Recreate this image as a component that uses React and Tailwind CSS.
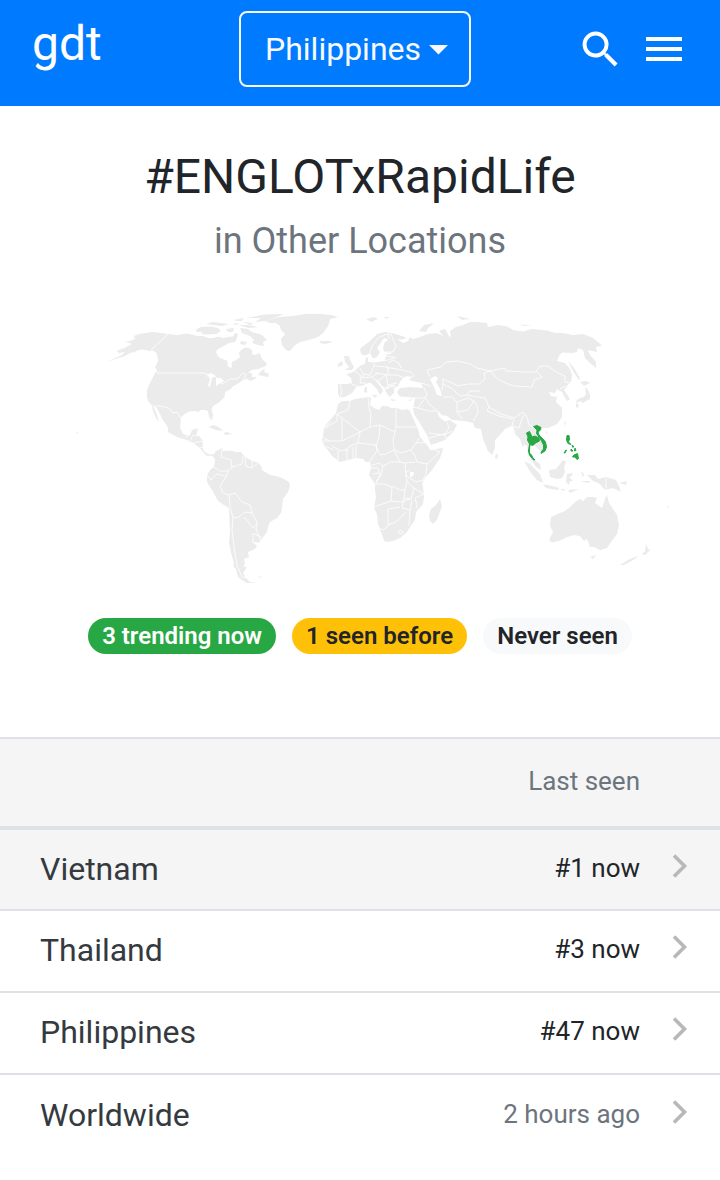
import React, { useState } from 'react';

const locations = [
    { name: 'Vietnam', seen: '#1 now', active: true, current: true },
    { name: 'Thailand', seen: '#3 now', active: true },
    { name: 'Philippines', seen: '#47 now', active: true },
    { name: 'Worldwide', seen: '2 hours ago', active: false },
];

const countries = ['Philippines', 'Thailand', 'Vietnam', 'Worldwide'];

// Land masses
const land = [
    // North and Central America
    'M117 351L121 349 125 348 128 346 132 344 129 343 125 342 130 341 135 339 134 336 139 334 145 333 153 332 161 333 168 334 177 335 187 333.5 192 334.5 197 336 203 336 208 338 213 338 218 336.5 223 338 228 337 233 336.5 235 333 238 334 237 338 235 342 229 343 223 346.5 218 349 216 352 218 356 220 358 227 360.5 228 366.5 231.5 368 232 362 236 360 240 357 239 353 241 350 245 347.5 249 348 252 350 252 354 255 355 260 353 261 357 263 360 266.5 363 266 366 258 369 252 370 248 373 252 373 252 377 255 377 257 376 255 379 250 381 248 379 243 380 239 383 237 384 232 387 231 389 225 392 225 395 224 398 218 403 213 406 211.5 409 213 415 212 420.5 209 417 208 411 205 410 200 410 199 412 195 411 190 411.5 187 412.5 182 416 181 418 180 427 183 434 187 435.5 190 435 192 430 195 429 198 428.5 197 433 196 436 199 436 203 441 202.5 447 204 451 208 454 213 454.5 214 457 210 455.5 207 456 203 452 200 448 196 445 193 443 187 440 183 439 177 437 168 432 168 428 166.5 425 162 419 160 414 158 410 156 407 153.5 407 157 415 159 422.5 155.5 417 153 411 152 406 148 401 147 397 147 390 149 385 151.5 380 155 373 157 370 155 367 157 364 158 360 156 353 153 351 150 351 142 349.5 138 350 135 352 130 353 125 356 117 358.5 107 361.5 122 355 125 352 119 353z',
    'M196 330L202 327 210 326.5 218 328 221 331 216 334 207 334.5 201 334 203 332 197 332z',
    'M195 330L201 327 207 327 201 330zM206 324L213 322 220 323 229 324 222 326 213 325zM226 329L234 328 233 332 228 332zM232 324L239 323 237 325zM233 320L244 318 242 321 237 321zM240 328L248 329 252 332 262 335 267 340 263 342 264 346 258 345 252 343 254 340 250 336 242 333zM241 341L247 342 245 345 240 344zM238 325L248 325 258 327 249 328zM243 322L254 323 250 325zM247 318L264 314.5 284 314 274 318 265 321 255 322 261 318z',
    'M265 321L279 317 293 316 305 314 320 314 331 315 338 317 330 319 329 324 326 329 323 333 318 337 309 340 300 342 294 346 290 351 286 350 282 345 281 339 285 334 281 330 280 326 276 323 270 323z',
    'M258 375L262 370 265 369 264 372 269 374 268 377z',
    'M208 427L214 425 220 428 223 431 216 430zM223 433L227 432 232 434 226 435z',
    // South America
    'M213 455L216 451 222 448 223 451 230 450.5 236 452 241 452 245 457 252 461 258 462.5 261 466 262 470 270 475 276 476 282 478 289 482 290 486 288 492 283 499 282 508 281 513 277 518 270 522 268 527 267 532 261 540 259 542.5 253 542 257 546 255 549 248 552 249 557 244 559 245 564 243 566 247 567 243 573 245 577 250 582 256 583 247 583 242 580 238 577 236 569 233 566 234 563 231 553 229 542 230 533 229 508 224 505 218 501 212 490 207 482 207 475 210 470 214 467 215 460z',
    'M258 577L262 576 260 578z',
    // Africa
    'M342 401L350 401 355 399 362 398 368 397 371 398 370 405 374 408 379 410 382 406 387 406 391 408 397 408 402 410 407 409 410 411 413 418 418 429 420 437 424 442 428 446 430 450 436 449 443 448 442 453 440 458 432 470 425 478 422 484 423 487 424 497 423 504 416 512 415 520 410 527 407 532 400 538 393 541 387 542 384 541 383 537 378 524 377 514 374 508 376 497 375 490 375 484 369 475 371 468 370 462 366 462 363 459 356 458 348 460 340 462 332 456 328 450 325 447 322 440 323 436 324 428 328 422 332 418 336 413 338 404z',
    'M440 499L442 506 437 520 433 524 430 521 429 515 431 509 436 505z',
    // Europe and Asia
    'M339 397.5L338 392 338 384 347 384 352 383 351 378 346 374 351 373 355 370.5 360 366 365 363.5 366 357 368 358 368 362 375 362.5 385 361 386 355 393 353 385 352 383 349 384 343 388 340 386 338 383 339 380 344 377 348 380 352 377 357 373 358.5 370 353 365 355.5 361 354 360 349 362 347 370 341 377 334 385 332 392 333 402 336 407 338 402 339.5 397 339 403 343 408 341 410 337 413 339 420 337 428 334 437 333 443 336 439 331 445 329 449 336 451 337 450 331 456 327 463 325 470 322 477 322 487 323 488 327 498 325 507 326.5 513 330 523 331.5 532 329 547 330.5 555 333 563 333 573 335 583 334 593 338 602 345.5 596 347 597 352 588 350 590 355 596 362 596 368 590 363 585 358 583 350 578 348 577 352 573 353 562 352.5 559 356 557 361 565 363 570 369 572 375 571 382 567 386 564 390 566 393 570 399 567 401 564 396 562 392 557 389 555 393 549 392 551 396 557 397 556 402 562 408 562 417 557 424 548 428 541 428 538 432 541 438 545 442 547 448 543 453 538 449 533 444 530 446 530 454 535 460 540 464 541 470 536 467 532 461 528 454 527 445 522 446 520 439 515 434 514 428 511 426 505 429 499 436 495 440 495 448 492 455 488 451 483 439 481 429 475 428 473 423 465 421 452 420 447 416 442 415 437 410 439 417 445 421.5 450 420 457 425 453 432 445 440 431 445 427 435 421 425 414 414 413 409 415 398 407 397 400 396.5 397 392 400 388 410 387 423 388 421 383 409 380 412 377 407 376 403 378 400 382 398 386 394 388 394 393 390 397 387 394 384 388 378 382 375 380 381 387 383 391 380 395 377 389 370 382.5 366 384 361 386 356 387 352 393 345 397z',
    'M419 331L424 325 434 323 428 328 426 332zM366 319L374 317 378 319 371 322zM384 317L390 317 386 319zM457 316L470 319 462 320zM518 324L532 326 524 326z',
    'M344 356L349 356 350 360 354 367 352 370 345 370 349 367 345 362zM338 364L342 361 343 365 338 367z',
    'M320 341L326 341 332 341 330 343 324 344 320 343z',
    'M371 395L377 395 376 398zM365 387L367 387 367 393 364 392zM390 399L397 400 392 401zM408 400L413 399 410 401z',
    'M568 361L574 368 580 378 579 380 573 371zM580 382L586 381 590 383 584 386zM585 387L588 390 590 395 590 399 586 401 583 403 580 401 577 403 576 401 580 398 584 397 586 394zM576 403L579 405 578 408 576 407z',
    'M564 421L566 423 565 426zM545 431L548 432 546 434zM496 453L498 456 497 459 495 458z',
    // Indonesia and New Guinea
    'M524 461L530 464 540 474 543 483 537 480 531 473zM543 484L552 486 559 488 558 490 546 488zM560 489L565 489 564 491zM568 490L579 489 570 493zM549 470L556 469 560 464 563 460 566 462 564 468 565 472 562 478 557 479 550 477zM567 474L573 473 572 476 569 477 573 481 570 481 569 485 566 482zM581 471L584 474 583 478zM580 481L591 481 588 483zM587 475L595 475 598 479 606 477 616 480 619 486 621 492 613 488 605 490 600 484 593 481zM619 483L627 481 626 485zM630 484L637 489z',
    // Oceania
    'M549 540L553 532 550 526 551 517 560 513 565 511 570 507 575 502 580 499 583 501 587 497 593 497 597 498 595 503 602 508 605 499 607 495 609 503 613 509 617 515 619 525 617 534 611 542 607 548 600 550 594 547 590 547 587 539 584 541 580 536 574 535 567 537 559 541 552 542.5z',
    'M590 557L596 555 593 559zM646 544L648 549 650 550 645 555 642 554 645 551zM638 556L635 559 624 565 620 565 630 559zM643 514L646 517zM667 507L669 506 669 508z',
    'M76 432L78 432 78 434z',
];

// Country borders
const borders = [
    'M168 334L151 350 156 353 158 361M155 369L158 373H204L209 375 216 377 222 384 230 379 237 379 243 373 246 374 244 380M152 406H160L169 408 173 413 177 412 181 419M190 441L193 435 196 436M193 443L203 441M200 447L204 448M185 438L190 434',
    'M222 449L221 457 231 460 232 468 228 471 226 477 220 486 223 493 229 495M207 475L211 480 217 474 225 476M214 467L220 471 228 471M232 467L242 464 243 456M245 457L246 466 252 468 258 463M252 461V467M229 495L235 493 242 502 250 505 252 513 257 522 256 529 261 541M229 495L230 507 233 518 239 517 245 512 252 513M233 518L232 530 234 547 237 565 242 577 246 578M244 517L253 528 257 523M254 534L261 537M253 533L253 543',
    'M350 401L348 410 337 414M337 414L337 421 325 428M337 414L342 418 360 432 370 427 371 415 369 407 368 398M342 418L342 441 330 441 323 438M325 428L331 421M342 441L352 436 360 432 358 443 350 446 345 452M396 408V427H418M396 427L395 432 380 425 370 427M380 425L379 437 376 446 380 455M395 432L393 440 394 449 400 453 411 450 416 443 419 438M358 443L376 445 377 451 372 458 370 462M353 447V459M356 445V459M347 450V460M338 450V460M332 446L341 451 347 449M323 441H330M325 446L334 450M380 455L386 454 394 450 400 462 391 462 383 466 379 463 370 466M411 450L415 456 417 462 427 464 440 452 430 448M416 443L427 442M427 464L426 474 423 480M400 462L405 463 415 462M405 463L406 474 407 482 405 490 400 490 392 486M405 475L416 482 424 480M407 482L414 488 424 494M405 490L404 498 411 499 414 488M375 484L384 484 392 487 391 501 374 507M391 501L401 502 410 499M404 498L402 508 410 510 412 500M388 509V526L383 530 380 528M388 509L400 507M388 525L396 522 406 512M410 510L409 526M398 532L401 530 403 533 400 534zM371 468L378 468 380 475 376 482M373 474L379 473M383 466L381 475 376 483M424 494L415 498 417 505 416 508M405 473L410 470',
    'M340 384L342 391 340 397M351 384L360 387M355 371L361 376 360 383 366 383M360 368L363 374 370 375 374 366 374 363M374 366L388 367 388 375 375 373M364 374L362 378 372 377 378 373M372 378L378 381 386 375 388 385 397 383M378 381L383 388 390 387 395 385M388 375L397 375 405 378M386 368L392 368 411 372 414 376 408 379M388 363L393 360 399 363 401 368M385 361L396 357M385 356L394 357M385 352L393 352 396 346 391 334M370 353L372 346 378 338 387 334 390 339M387 334L391 334M386 386H395M384 390L389 388',
    'M424 388L427 394 425 398 413 398M421 383L431 386M426 398L429 404 437 411M413 407L418 408 425 398M418 408L429 411 436 411M429 433L444 435 452 431M444 435L449 428 447 422M429 438L444 434 447 440M430 377L427 370 441 367 446 362 458 361 470 364 477 368 490 371M442 390L443 384 451 388 460 396 466 395 470 391 480 391M443 384L443 379 450 382 458 386 468 384 479 384 485 379 484 373 490 371M443 397L452 397 457 402 457 412 462 419M457 402L468 398 474 401 468 410 457 412M466 395L478 397M474 401L477 406 478 413 473 421M478 397L485 398 489 407 501 414 514 418 523 412 527 417M489 407L487 411 499 416 512 419M490 371L505 368 506 371 523 372 536 372 540 366 548 366 558 373 565 376 565 382 572 383M490 371L499 380 513 386 532 387 534 380 542 377 536 371M514 418L512 426 519 428 521 421 524 415M527 417L529 425 533 427M560 389L566 386M606 478V490',
];

// Places where the tag is trending
const trending = [
    // Thailand
    'M526.5 433L529.5 431.5 531 434.5 532 437 535 436 539 438 539.5 441 535.5 443 533 445.5 530 444.5 529.5 449 529.5 453 531.5 455 533 458 535 460 533 459.5 529.5 455 528.5 451 529.5 444 527.5 440 528 437z',
    // Vietnam
    'M533.5 426.5L537 425.5 541 427.5 540.5 430 538 432 539 435 543 439 545.5 442 546.5 447 545 451 541 453.5 541.5 451.5 543.5 449 543.5 445 541 440 536.5 433.5 537 430z',
    // Philippines
    'M567 435.5L569 435.5 569.5 439 568.5 442 571 444.5 568 443.5 566.5 440zM572 445.5L573.5 446 573 447.5zM571 449L573 451 571 451zM575 448L576 450.5 574.5 451zM574 455L577.5 453.5 578.5 458.5 577 459.5 575 457 572.5 457zM566.5 450L565 453 564 453 566 450z',
];

function WorldMap() {
    return (
        <svg viewBox="40 300 640 300" className="block w-full" role="img" aria-label="World map">
            <g fill="#ebebeb">
                {land.map((d) => (
                    <path key={d} d={d} />
                ))}
            </g>
            {/* Lakes and inland seas */}
            <path
                fill="#fff"
                d="M430 379L435 376 438 378 436 382 440 389 442 396 437 395 434 387zM205 377L211 373 216 376 212 378 210 387 208 386 210 379 208 376zM216 378L221 378 224 381 219 384 216 386zM410 472L414 472 413 476 410 477z"
            />
            <g fill="none" stroke="#fff" strokeWidth="0.8" strokeLinejoin="round">
                {borders.map((d) => (
                    <path key={d} d={d} />
                ))}
            </g>
            <g fill="#28a745" stroke="#28a745" strokeWidth="1" strokeLinejoin="round">
                {trending.map((d) => (
                    <path key={d} d={d} />
                ))}
            </g>
        </svg>
    );
}

function Header() {
    const [country, setCountry] = useState('Philippines');

    return (
        <header className="grid grid-cols-[1fr_auto_1fr] items-center bg-[#007bff] pt-[11px] pr-8 pb-[19px] pl-[22px] text-white">
            <a href="#" className="pb-[10px] pl-[10px] text-5xl leading-[56px]">gdt</a>
            <div className="relative">
                <select
                    aria-label="Location"
                    value={country}
                    onChange={(e) => setCountry(e.target.value)}
                    className="block h-[76px] w-[232px] appearance-none rounded-lg border-2 border-[#f8f9fa] bg-transparent pl-6 text-[32px] text-[#f8f9fa]"
                >
                    {countries.map((name) => (
                        <option key={name} value={name} className="text-black">{name}</option>
                    ))}
                </select>
                <svg viewBox="0 0 20 10" className="pointer-events-none absolute top-[34px] right-[22px] h-[10px] w-5" fill="#f8f9fa">
                    <path d="M0 0h19L9.5 9.5z" />
                </svg>
            </div>
            <div className="flex justify-end gap-4">
                <button type="button" aria-label="Search">
                    <svg viewBox="0 0 24 24" className="size-12" fill="currentColor">
                        <path
                            transform="translate(0.3 0.3)"
                            d="M15.5 14h-.79l-.28-.27A6.471 6.471 0 0 0 16 9.5 6.5 6.5 0 1 0 9.5 16c1.61 0 3.09-.59 4.23-1.57l.27.28v.79l5 4.99L20.49 19l-4.99-5zm-6 0C7.01 14 5 11.99 5 9.5S7.01 5 9.5 5 14 7.01 14 9.5 11.99 14 9.5 14z"
                        />
                    </svg>
                </button>
                <button type="button" aria-label="Menu">
                    <svg viewBox="0 0 24 24" className="size-12" fill="currentColor">
                        <path d="M3 18h18v-2H3v2zm0-5h18v-2H3v2zm0-7v2h18V6H3z" />
                    </svg>
                </button>
            </div>
        </header>
    );
}

export default function App() {
    return (
        <div className="min-h-screen bg-white font-[Roboto,sans-serif] text-[#212529]">
            <Header />

            <main>
                <h1 className="pt-[41px] text-center text-5xl leading-[60px]">#ENGLOTxRapidLife</h1>
                <h2 className="pt-3 text-center text-4xl leading-[44px] text-[#6c757d]">in Other Locations</h2>

                <div className="px-10 pt-[37px]">
                    <WorldMap />
                </div>

                {/* Legend */}
                <div className="flex justify-center gap-4 pt-[18px] pb-[83px] text-2xl leading-9 font-semibold">
                    <span className="rounded-full bg-[#28a745] px-[14px] text-white">3 trending now</span>
                    <span className="rounded-full bg-[#ffc107] px-[14px]">1 seen before</span>
                    <span className="rounded-full bg-[#f8f9fa] px-[14px]">Never seen</span>
                </div>

                <table className="w-full">
                    <thead>
                        <tr className="h-[90px] border-t-2 border-b-4 border-[#dee2e6] bg-[#f5f5f5]">
                            <th aria-label="Location" />
                            <th className="pb-[3px] text-right text-[26px] font-normal text-[#6c757d]">Last seen</th>
                            <th className="w-20" aria-label="Open" />
                        </tr>
                    </thead>
                    <tbody>
                        {locations.map((location) => (
                            <tr
                                key={location.name}
                                className={`h-[82px] border-b-2 border-[#dee2e6] last:border-b-0 ${location.current ? 'bg-[#f5f5f5]' : ''}`}
                            >
                                <td className="pb-[2px] pl-10 text-[32px] text-[#343a40]">
                                    <a href="#">{location.name}</a>
                                </td>
                                <td className={`pb-[3px] text-right text-[26px] ${location.active ? '' : 'text-[#6c757d]'}`}>
                                    {location.seen}
                                </td>
                                <td className="w-20 pb-2 pl-8">
                                    <svg viewBox="0 0 16 24" className="h-6 w-4" fill="none" stroke="#b8b8b8" strokeWidth="3.6">
                                        <path d="M2 1.5L12.5 12 2 22.5" />
                                    </svg>
                                </td>
                            </tr>
                        ))}
                    </tbody>
                </table>
            </main>
        </div>
    );
}
